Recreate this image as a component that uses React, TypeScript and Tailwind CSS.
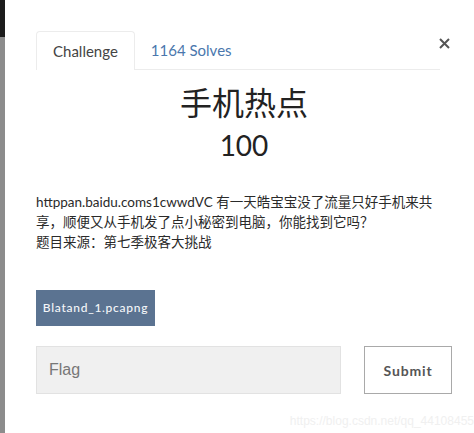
const lato = { fontFamily: "Lato, 'Noto Sans CJK SC', sans-serif" }

const App = () => {
    return (
        <div className="w-[474px] h-[433px] bg-white flex overflow-hidden relative" style={lato}>
            <div className="w-[5px] flex flex-col">
                <div className="h-[37px] bg-[#1c1c1c]" />
                <div className="flex-1 bg-[#8c8c8c]" />
            </div>
            <div className="flex-1 pl-[31px] pr-[22px] pt-[31px] relative">
                <button className="absolute right-[24px] top-[38px] text-[#555]">
                    <svg width="11" height="11" viewBox="0 0 11 11" stroke="currentColor" strokeWidth="2">
                        <path d="M1 1L10 10M10 1L1 10" />
                    </svg>
                </button>
                <div className="flex items-end w-[404px] border-b border-[#ececec]">
                    <div className="h-[39px] px-4 flex items-center text-[15px] text-[#444] border border-b-0 border-[#ececec] rounded-t bg-white -mb-px">Challenge</div>
                    <div className="h-[38px] px-4 flex items-center text-[15px] text-[#4a77ad]">1164 Solves</div>
                </div>
                <h1 className="text-center text-[32px] leading-[40px] text-[#222] mt-[13px]">手机热点</h1>
                <p className="mt-[2px] text-center text-[28px] leading-[40px] text-[#222]">100</p>
                <p className="mt-[27px] w-[412px] text-[13.5px] leading-[20px] text-[#2a2a2a]">
                    httppan.baidu.coms1cwwdVC 有一天皓宝宝没了流量只好手机来共享，顺便又从手机发了点小秘密到电脑，你能找到它吗？
                    <br />
                    题目来源：第七季极客大挑战
                </p>
                <button className="mt-[38px] h-[36px] w-[119px] bg-[#5b7391] text-[#f4f6f9] text-[12px] font-medium tracking-[0.06em]">Blatand_1.pcapng</button>
                <div className="mt-[20px] flex justify-between">
                    <div className="w-[305px] h-[48px] bg-[#f0f0f0] border border-[#e2e2e2] flex items-center pl-[12px] text-[16px] text-[#777]" style={{ fontFamily: "'Liberation Sans', Arial, sans-serif" }}>Flag</div>
                    <button className="w-[88px] h-[48px] border border-[#a9a9a9] bg-white text-[14px] font-bold text-[#555] tracking-[0.06em]">Submit</button>
                </div>
            </div>
            <div className="absolute right-[0px] bottom-[3px] text-[12px] text-[#f0f0f0]" style={{ fontFamily: "'Liberation Sans', Arial, sans-serif" }}>https://blog.csdn.net/qq_44108455</div>
        </div>
    )
}

export default App
